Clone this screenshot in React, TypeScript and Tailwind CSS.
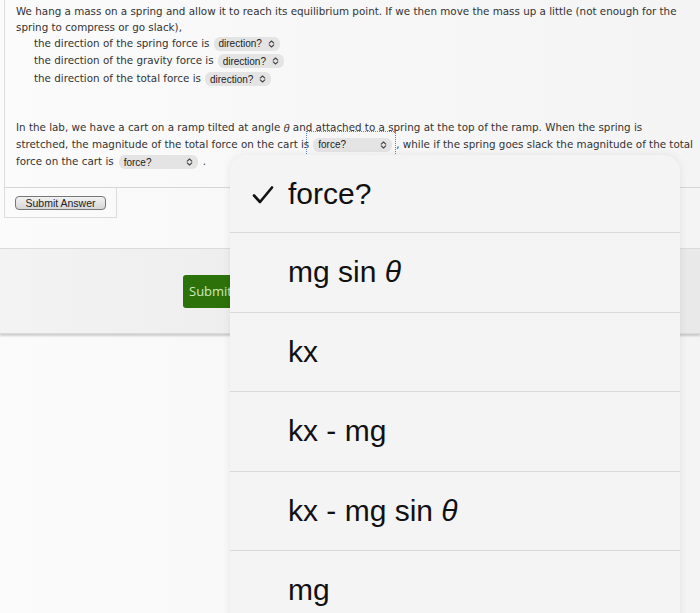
import React from 'react';

function Chevrons() {
  return (
    <svg width="7" height="8" viewBox="0 0 7 8" fill="none" className="shrink-0">
      <path d="M1.2 3.2 L3.5 1 L5.8 3.2" stroke="#444" strokeWidth="1.1" strokeLinecap="round" strokeLinejoin="round" />
      <path d="M1.2 4.8 L3.5 7 L5.8 4.8" stroke="#444" strokeWidth="1.1" strokeLinecap="round" strokeLinejoin="round" />
    </svg>
  );
}

function Pill({ label, wide = false }: { label: string; wide?: boolean }) {
  return (
    <span
      className={`inline-flex items-center justify-between h-[14px] rounded-[6px] bg-[#e4e4e4] pl-[5px] pr-[5px] align-middle text-[10px] text-[#222] font-['Liberation_Sans',Arial,sans-serif] ${wide ? 'w-[79px]' : 'gap-[6px]'}`}
    >
      <span>{label}</span>
      <Chevrons />
    </span>
  );
}

function Check() {
  return (
    <svg width="22" height="20" viewBox="0 0 22 20" fill="none">
      <path d="M2 10.5 L8 17 L20 2.5" stroke="#111" strokeWidth="2.6" strokeLinecap="round" strokeLinejoin="round" />
    </svg>
  );
}

export default function App() {
  const options = [
    { label: 'mg sin ', theta: true },
    { label: 'kx', theta: false },
    { label: 'kx - mg', theta: false },
    { label: 'kx - mg sin ', theta: true },
    { label: 'mg', theta: false },
  ];

  return (
    <div className="relative w-[700px] h-[613px] overflow-hidden bg-gradient-to-r from-[#fbfbfb] via-[#f7f7f7] to-[#f4f4f4] font-['DejaVu_Sans',Verdana,sans-serif] text-[10.35px] text-[#333]">
      {/* Question panel */}
      <div className="ml-[4px] border-l border-[#dcdcdc]">
        <div className="border-b border-[#d6d6d6] pl-[11px] pt-[3px] h-[188px]">
          <div className="leading-[16px] whitespace-nowrap">
            <div>We hang a mass on a spring and allow it to reach its equilibrium point. If we then move the mass up a little (not enough for the</div>
            <div>spring to compress or go slack),</div>
          </div>
          <div className="pl-[18px] whitespace-nowrap">
            <div className="h-[17px] flex items-center gap-[4px]">
              <span>the direction of the spring force is</span>
              <Pill label="direction?" />
            </div>
            <div className="h-[18px] flex items-center gap-[4px]">
              <span>the direction of the gravity force is</span>
              <Pill label="direction?" />
            </div>
            <div className="h-[18px] flex items-center gap-[4px]">
              <span>the direction of the total force is</span>
              <Pill label="direction?" />
            </div>
          </div>

          <div className="mt-[32px] whitespace-nowrap">
            <div className="h-[16px] flex items-center">
              In the lab, we have a cart on a ramp tilted at angle&nbsp;
              <i className="font-['Liberation_Sans',Arial,sans-serif] text-[11px]">θ</i>
              &nbsp;and attached to a spring at the top of the ramp. When the spring is
            </div>
            <div className="h-[17px] flex items-center">
              <span>stretched, the magnitude of the total force on the cart is</span>
              <span className="relative ml-[4px] mr-[4px] inline-flex">
                <span className="absolute left-[-7px] right-[-4px] top-[-7px] bottom-[-4px] border border-dotted border-[#5a86c0]" />
                <Pill label="force?" wide />
              </span>
              <span>, while if the spring goes slack the magnitude of the total</span>
            </div>
            <div className="h-[18px] flex items-center">
              <span>force on the cart is</span>
              <span className="ml-[5px] mr-[5px] inline-flex">
                <Pill label="force?" wide />
              </span>
              <span>.</span>
            </div>
          </div>
        </div>
        <div className="w-[112px] h-[30px] border-r border-b border-[#dcdcdc] flex items-center pl-[10px]">
          <button className="w-[91px] h-[14px] rounded-[4px] border border-[#777] bg-gradient-to-b from-[#f2f2f2] to-[#d6d6d6] text-[10.5px] leading-[12px] text-[#222] font-['Liberation_Sans',Arial,sans-serif]">
            Submit Answer
          </button>
        </div>
      </div>

      {/* Footer band */}
      <div className="mt-[30px] h-[86px] border-t border-[#dadada] bg-gradient-to-r from-[#f3f3f3] via-[#ececec] to-[#e9e9e9] shadow-[0_2px_2px_rgba(0,0,0,0.18)] border-b border-[#c9c9c9] pt-[26px] pl-[183px]">
        <button className="h-[33px] w-[62px] rounded-[3px] bg-[#2c7109] text-left pl-[6px] text-[13px] text-[#cfe8bd] font-['Open_Sans',sans-serif]">
          Submit
        </button>
      </div>

      {/* Native select popup */}
      <div className="absolute left-[230px] top-[155px] w-[450px] h-[480px] rounded-t-[16px] bg-[#f4f4f4] shadow-[0_0_8px_rgba(0,0,0,0.08)] font-['Liberation_Sans',Arial,sans-serif] text-[#111]">
        <div className="h-[77px] flex items-center pl-[22px]">
          <div className="w-[36px] flex items-center pt-[2px]">
            <Check />
          </div>
          <span className="text-[30px] leading-[30px]">force?</span>
        </div>
        {options.map((o) => (
          <div key={o.label} className="h-[79.5px] border-t border-[#d9d9d9] flex items-center pl-[58px]">
            <span className="text-[30px] leading-[30px] whitespace-pre">
              {o.label}
              {o.theta && <i>θ</i>}
            </span>
          </div>
        ))}
      </div>
    </div>
  );
}
